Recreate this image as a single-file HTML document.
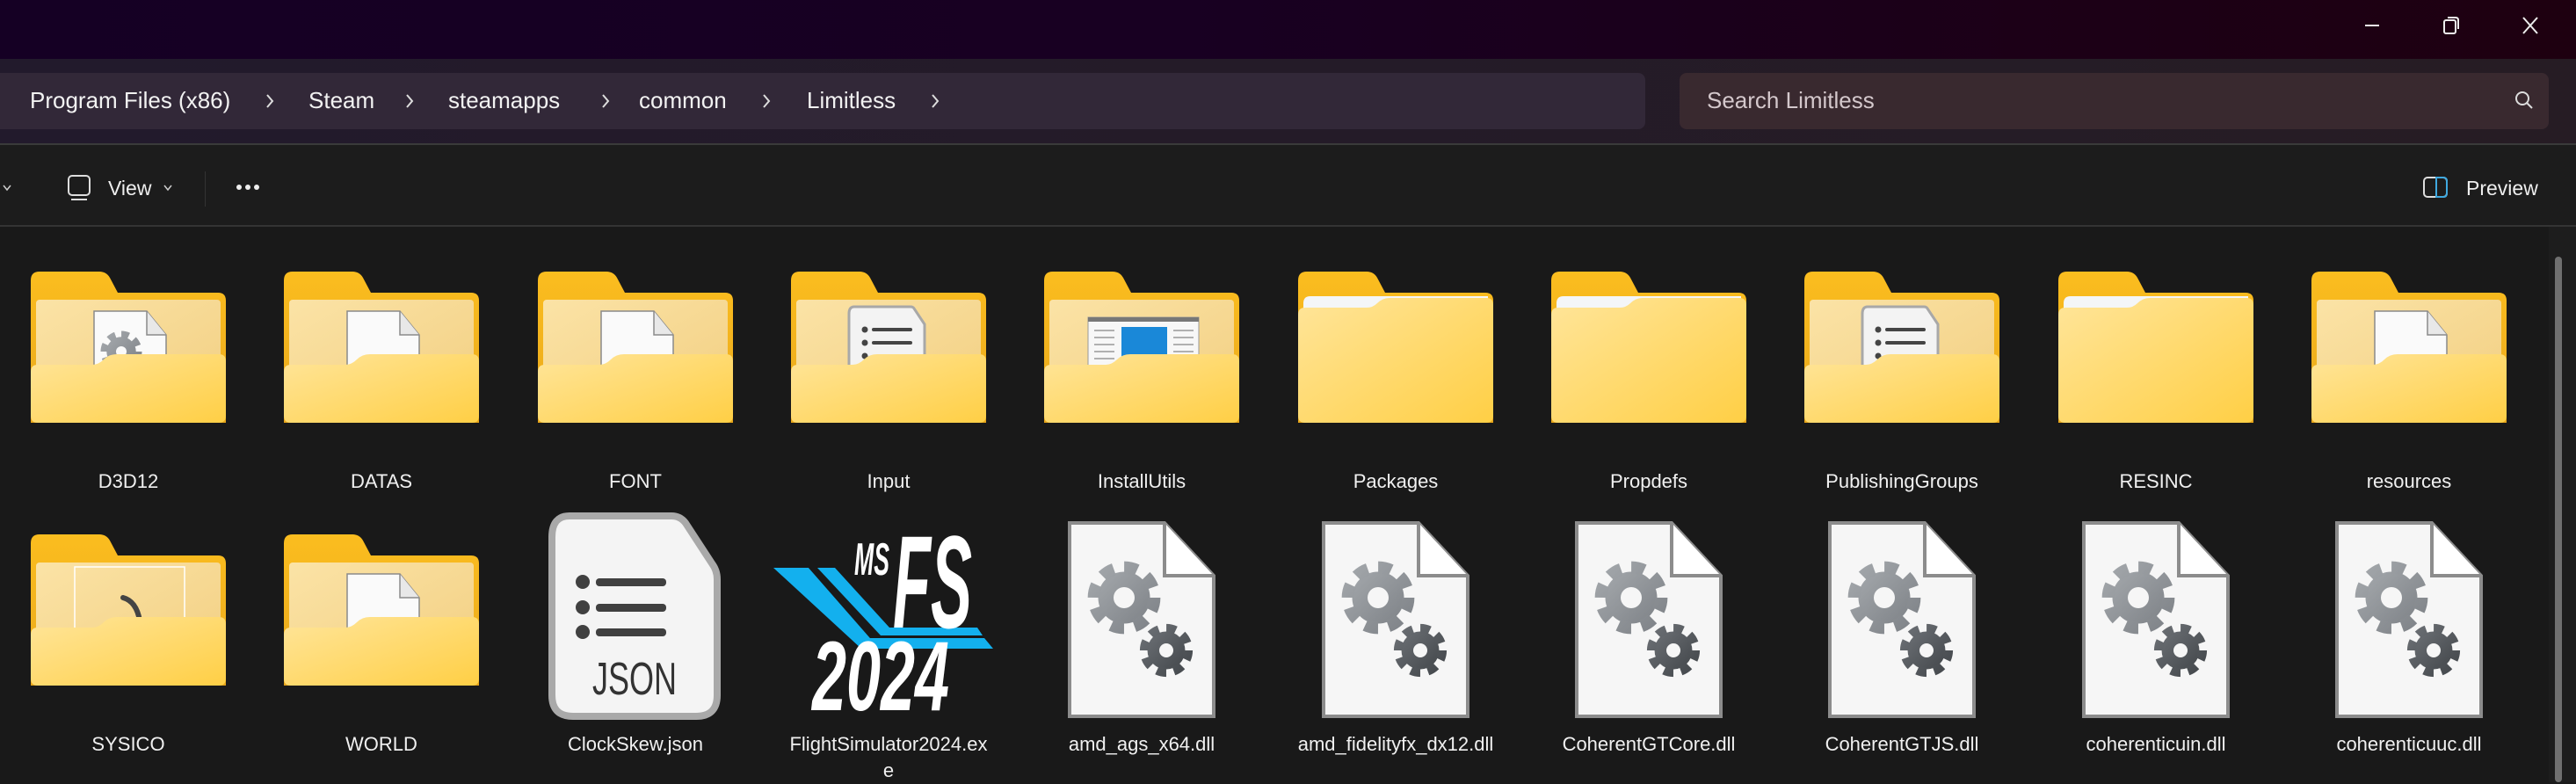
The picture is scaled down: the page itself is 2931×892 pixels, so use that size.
<!DOCTYPE html>
<html><head><meta charset="utf-8">
<style>
*{margin:0;padding:0;box-sizing:border-box}
body{width:2931px;height:890px;overflow:hidden;background:#191919;font-family:"Liberation Sans",sans-serif;color:#fff;position:relative}
.abs{position:absolute}
#title{left:0;top:0;width:2931px;height:67px;background:linear-gradient(90deg,#150024 0%,#180022 45%,#1e0010 100%)}
#addr{left:0;top:67px;width:2931px;height:97px;background:linear-gradient(90deg,#221a2c,#261c24)}
#crumb{left:0;top:83px;width:1872px;height:64px;background:#322838;border-radius:0 8px 8px 0}
#search{left:1911px;top:83px;width:989px;height:64px;background:#39292f;border-radius:8px}
.bc{top:97px;font-size:26px;line-height:34px;color:#f2f2f2;white-space:nowrap}
#sep1{left:0;top:163px;width:2931px;height:2px;background:#3a3a3a}
#tool{left:0;top:165px;width:2931px;height:92px;background:#1c1c1c}
#sep2{left:0;top:256px;width:2931px;height:2px;background:#343434}
.lbl{width:290px;text-align:center;font-size:22px;line-height:30px;color:#f0f0f0;white-space:nowrap}
</style></head><body>
<svg width="0" height="0" style="position:absolute">
<defs>
<linearGradient id="gBack" x1="0" y1="0" x2="0" y2="1"><stop offset="0" stop-color="#fbbd1f"/><stop offset="1" stop-color="#eaa91c"/></linearGradient>
<linearGradient id="gIn" x1="0" y1="0" x2="1" y2="1"><stop offset="0" stop-color="#fbe3a6"/><stop offset="1" stop-color="#f2cf82"/></linearGradient>
<linearGradient id="gFr" x1="0" y1="0" x2="1" y2="1"><stop offset="0" stop-color="#ffe59a"/><stop offset="1" stop-color="#ffcf45"/></linearGradient>
<linearGradient id="gGear" x1="0" y1="0" x2="1" y2="1"><stop offset="0" stop-color="#a3a7ab"/><stop offset="1" stop-color="#7f8388"/></linearGradient>
<linearGradient id="gGear2" x1="0" y1="0" x2="1" y2="1"><stop offset="0" stop-color="#6b6f74"/><stop offset="1" stop-color="#44484c"/></linearGradient>
<symbol id="back" viewBox="0 0 222 176">
<path d="M0,10 Q0,0 10,0 H78 Q86,0 90,7 L99,24 H213 Q222,24 222,33 V166 H0 Z" fill="url(#gBack)"/>
<rect x="6" y="32" width="210" height="120" rx="4" fill="url(#gIn)"/>
</symbol>
<symbol id="front" viewBox="0 0 222 176">
<path d="M0,172 H222 V166 H0Z" fill="#e6a51a"/>
<path d="M0,114 Q0,106 8,106 H70 Q77,106 83,100 Q89,94 98,94 H214 Q222,94 222,102 V164 Q222,172 214,172 H8 Q0,172 0,164 Z" fill="url(#gFr)"/>
</symbol>
<symbol id="front2" viewBox="0 0 222 176">
<path d="M6,36 Q6,28 14,28 H216 V60 H6Z" fill="#f4f6f8"/>
<path d="M0,172 H222 V166 H0Z" fill="#e6a51a"/>
<path d="M0,49 Q0,41 8,41 H78 Q85,41 90,36 Q96,30 104,30 H214 Q222,30 222,38 V164 Q222,172 214,172 H8 Q0,172 0,164 Z" fill="url(#gFr)"/>
</symbol>
<symbol id="doc" viewBox="0 0 222 176">
<path d="M72,45 H132 L154,72 V112 H72 Z" fill="#fafafa" stroke="#8a8a8a" stroke-width="1.5"/>
<path d="M132,45 V72 H154" fill="#e8e8e8" stroke="#8a8a8a" stroke-width="1.5"/>
</symbol>
<symbol id="list" viewBox="0 0 222 176">
<path d="M72,40 Q66,40 66,48 V112 H152 V60 L140,42 Q139,40 136,40 Z" fill="#f3f3f3" stroke="#a8a8a8" stroke-width="3"/>
<circle cx="84" cy="66" r="3.5" fill="#444"/><rect x="92" y="64" width="46" height="4" rx="2" fill="#444"/>
<circle cx="84" cy="81" r="3.5" fill="#444"/><rect x="92" y="79" width="46" height="4" rx="2" fill="#444"/>
<circle cx="84" cy="96" r="3.5" fill="#444"/>
</symbol>
<symbol id="gear" viewBox="-50 -50 100 100">
<circle r="33"/><circle r="39" fill="none" stroke-width="16" stroke-dasharray="17 13.6" stroke-linejoin="round"/>
</symbol>
</defs></svg>

<div id="title" class="abs"></div>
<svg class="abs" style="left:2680px;top:10px" width="230" height="40">
<rect x="11" y="18" width="16" height="2" fill="#eee"/>
<rect x="101" y="13" width="13" height="15" rx="2" fill="none" stroke="#eee" stroke-width="2"/><path d="M105,10 H114 Q117,10 117,13 V23" fill="none" stroke="#eee" stroke-width="2"/>
<path d="M191,10 L207,28 M207,10 L191,28" stroke="#eee" stroke-width="2"/>
</svg>
<div id="addr" class="abs"></div>
<div id="crumb" class="abs"></div>
<div id="search" class="abs"></div>
<div class="abs bc" style="left:34px">Program Files (x86)</div>
<div class="abs bc" style="left:351px">Steam</div>
<div class="abs bc" style="left:510px">steamapps</div>
<div class="abs bc" style="left:727px">common</div>
<div class="abs bc" style="left:918px">Limitless</div>
<svg class="abs" style="left:0;top:100px" width="1100" height="30">
<g fill="none" stroke="#ddd" stroke-width="2"><path d="M304,8 L310,15 L304,22"/><path d="M463,8 L469,15 L463,22"/><path d="M686,8 L692,15 L686,22"/><path d="M869,8 L875,15 L869,22"/><path d="M1061,8 L1067,15 L1061,22"/></g>
</svg>
<div class="abs bc" style="left:1942px;color:#d4c8cc">Search Limitless</div>
<svg class="abs" style="left:2860px;top:102px" width="24" height="24"><circle cx="10" cy="10" r="7" fill="none" stroke="#ddd" stroke-width="2"/><path d="M15,15 L21,21" stroke="#ddd" stroke-width="2"/></svg>
<div id="sep1" class="abs"></div>
<div id="tool" class="abs"></div>
<div id="sep2" class="abs"></div>
<svg class="abs" style="left:0;top:195px" width="320" height="40">
<path d="M4,16 L8,21 L12,16" fill="none" stroke="#ccc" stroke-width="1.5"/>
<rect x="78" y="5" width="24" height="22" rx="4" fill="none" stroke="#ddd" stroke-width="2"/><rect x="81" y="31" width="18" height="2" fill="#ddd"/>
<path d="M187,16 L191,21 L195,16" fill="none" stroke="#ccc" stroke-width="1.5"/>
<rect x="233" y="-15" width="1" height="65" fill="#333"/>
<circle cx="272" cy="18" r="3" fill="#eee"/><circle cx="282" cy="18" r="3" fill="#eee"/><circle cx="292" cy="18" r="3" fill="#eee"/>
</svg>
<div class="abs" style="left:123px;top:199px;font-size:23px;line-height:30px;color:#eee">View</div>
<svg class="abs" style="left:2756px;top:200px" width="30" height="28"><rect x="2" y="2" width="26" height="22" rx="4" fill="none" stroke="#ddd" stroke-width="2"/><path d="M16,2 H24 Q28,2 28,6 V20 Q28,24 24,24 H16Z" fill="none" stroke="#3fa9e0" stroke-width="2"/></svg>
<div class="abs" style="left:2806px;top:199px;font-size:23px;line-height:30px;color:#eee">Preview</div>

<div class="abs" style="left:2900px;top:258px;width:31px;height:632px;background:#1d1d1d"></div>
<div class="abs" style="left:2907px;top:292px;width:8px;height:598px;background:#707070;border-radius:4px"></div>

<!-- Row 1 folders -->
<svg class="abs" style="left:35px;top:309px" width="222" height="176" viewBox="0 0 222 176"><use href="#back"/><use href="#doc"/><use href="#gear" x="78" y="66" width="50" height="50" fill="url(#gGear)" stroke="url(#gGear)"/><circle cx="103" cy="91" r="6" fill="#fafafa"/><use href="#front"/></svg>
<svg class="abs" style="left:323px;top:309px" width="222" height="176" viewBox="0 0 222 176"><use href="#back"/><use href="#doc"/><use href="#front"/></svg>
<svg class="abs" style="left:612px;top:309px" width="222" height="176" viewBox="0 0 222 176"><use href="#back"/><use href="#doc"/><use href="#front"/></svg>
<svg class="abs" style="left:900px;top:309px" width="222" height="176" viewBox="0 0 222 176"><use href="#back"/><use href="#list"/><use href="#front"/></svg>
<svg class="abs" style="left:1188px;top:309px" width="222" height="176" viewBox="0 0 222 176"><use href="#back"/>
<rect x="50" y="52" width="126" height="62" fill="#f7f7f7" stroke="#999"/><rect x="50" y="52" width="126" height="5" fill="#777"/>
<rect x="88" y="63" width="52" height="50" fill="#1a88d8"/>
<g stroke="#999" stroke-width="1.5"><path d="M57,67H80M57,75H80M57,83H80M57,91H80M57,99H80M147,67H170M147,75H170M147,83H170M147,91H170"/></g>
<use href="#front"/></svg>
<svg class="abs" style="left:1477px;top:309px" width="222" height="176" viewBox="0 0 222 176"><use href="#back"/><use href="#front2"/></svg>
<svg class="abs" style="left:1765px;top:309px" width="222" height="176" viewBox="0 0 222 176"><use href="#back"/><use href="#front2"/></svg>
<svg class="abs" style="left:2053px;top:309px" width="222" height="176" viewBox="0 0 222 176"><use href="#back"/><use href="#list"/><use href="#front"/></svg>
<svg class="abs" style="left:2342px;top:309px" width="222" height="176" viewBox="0 0 222 176"><use href="#back"/><use href="#front2"/></svg>
<svg class="abs" style="left:2630px;top:309px" width="222" height="176" viewBox="0 0 222 176"><use href="#back"/><use href="#doc"/><use href="#front"/></svg>

<div class="abs lbl" style="left:1px;top:533px">D3D12</div>
<div class="abs lbl" style="left:289px;top:533px">DATAS</div>
<div class="abs lbl" style="left:578px;top:533px">FONT</div>
<div class="abs lbl" style="left:866px;top:533px">Input</div>
<div class="abs lbl" style="left:1154px;top:533px">InstallUtils</div>
<div class="abs lbl" style="left:1443px;top:533px">Packages</div>
<div class="abs lbl" style="left:1731px;top:533px">Propdefs</div>
<div class="abs lbl" style="left:2019px;top:533px">PublishingGroups</div>
<div class="abs lbl" style="left:2308px;top:533px">RESINC</div>
<div class="abs lbl" style="left:2596px;top:533px">resources</div>

<!-- Row 2 -->
<svg class="abs" style="left:35px;top:608px" width="222" height="176" viewBox="0 0 222 176"><use href="#back"/>
<rect x="50" y="37" width="125" height="80" fill="none" stroke="#fff" stroke-width="1.5"/>
<path d="M105,72 Q120,76 124,98" fill="none" stroke="#444" stroke-width="6" stroke-linecap="round"/>
<use href="#front"/></svg>
<svg class="abs" style="left:323px;top:608px" width="222" height="176" viewBox="0 0 222 176"><use href="#back"/><use href="#doc"/><use href="#front"/></svg>

<svg class="abs" style="left:624px;top:583px" width="196" height="236" viewBox="0 0 196 236">
<path d="M24,4 H140 Q150,4 156,12 L186,58 Q192,66 192,76 V208 Q192,232 168,232 H28 Q4,232 4,208 V28 Q4,4 24,4 Z" fill="#f4f4f4" stroke="#a9a9a9" stroke-width="8"/>
<circle cx="39" cy="79" r="8" fill="#404040"/><rect x="54" y="75" width="80" height="9" rx="4" fill="#404040"/>
<circle cx="39" cy="108" r="8" fill="#404040"/><rect x="54" y="104" width="80" height="9" rx="4" fill="#404040"/>
<circle cx="39" cy="136" r="8" fill="#404040"/><rect x="54" y="132" width="80" height="9" rx="4" fill="#404040"/>
<text x="98" y="207" text-anchor="middle" font-family="'Liberation Sans Narrow','Liberation Sans',sans-serif" font-size="52" fill="#333" textLength="96" lengthAdjust="spacingAndGlyphs">JSON</text>
</svg>

<svg class="abs" style="left:880px;top:596px" width="260" height="214" viewBox="0 0 260 214">
<path d="M0,50 H40 L110,130 H240 L250,142 H100 Z" fill="#13b0ee"/>
<path d="M40,50 H58 L122,121 H236 L232,130 H110 Z" fill="#191919"/>
<path d="M50,50 H70 L132,118 H232 L238,127 H122 Z" fill="#13b0ee"/>
<text x="92" y="58" font-family="'Liberation Sans Narrow','Liberation Sans',sans-serif" font-weight="bold" font-style="italic" font-size="52" fill="#fff" textLength="40" lengthAdjust="spacingAndGlyphs">MS</text>
<text x="136" y="118" font-family="'Liberation Sans Narrow','Liberation Sans',sans-serif" font-weight="bold" font-style="italic" font-size="150" fill="#fff" textLength="90" lengthAdjust="spacingAndGlyphs">FS</text>
<text x="44" y="212" font-family="'Liberation Sans Narrow','Liberation Sans',sans-serif" font-weight="bold" font-style="italic" font-size="112" fill="#fff" textLength="156" lengthAdjust="spacingAndGlyphs">2024</text>
</svg>

<div class="abs lbl" style="left:1px;top:832px">SYSICO</div>
<div class="abs lbl" style="left:289px;top:832px">WORLD</div>
<div class="abs lbl" style="left:578px;top:832px">ClockSkew.json</div>
<div class="abs lbl" style="left:866px;top:832px">FlightSimulator2024.ex</div>
<div class="abs lbl" style="left:866px;top:862px">e</div>

<!-- DLL icons -->
<svg width="0" height="0" style="position:absolute"><defs>
<symbol id="dll" viewBox="0 0 168 224">
<path d="M2,2 H110 L166,62 V222 H2 Z" fill="#f6f6f6" stroke="#8c8c8c" stroke-width="4"/>
<path d="M110,2 V62 H166" fill="#fff" stroke="#8c8c8c" stroke-width="4"/>
<use href="#gear" x="20" y="43" width="88" height="88" fill="url(#gGear)" stroke="url(#gGear)"/>
<circle cx="64" cy="87" r="12" fill="#f6f6f6"/>
<use href="#gear" x="80" y="115" width="64" height="64" fill="url(#gGear2)" stroke="url(#gGear2)"/>
<circle cx="112" cy="147" r="8" fill="#f6f6f6"/>
</symbol></defs></svg>
<svg class="abs" style="left:1215px;top:593px" width="168" height="224"><use href="#dll"/></svg>
<svg class="abs" style="left:1504px;top:593px" width="168" height="224"><use href="#dll"/></svg>
<svg class="abs" style="left:1792px;top:593px" width="168" height="224"><use href="#dll"/></svg>
<svg class="abs" style="left:2080px;top:593px" width="168" height="224"><use href="#dll"/></svg>
<svg class="abs" style="left:2369px;top:593px" width="168" height="224"><use href="#dll"/></svg>
<svg class="abs" style="left:2657px;top:593px" width="168" height="224"><use href="#dll"/></svg>

<div class="abs lbl" style="left:1154px;top:832px">amd_ags_x64.dll</div>
<div class="abs lbl" style="left:1443px;top:832px">amd_fidelityfx_dx12.dll</div>
<div class="abs lbl" style="left:1731px;top:832px">CoherentGTCore.dll</div>
<div class="abs lbl" style="left:2019px;top:832px">CoherentGTJS.dll</div>
<div class="abs lbl" style="left:2308px;top:832px">coherenticuin.dll</div>
<div class="abs lbl" style="left:2596px;top:832px">coherenticuuc.dll</div>
</body></html>
